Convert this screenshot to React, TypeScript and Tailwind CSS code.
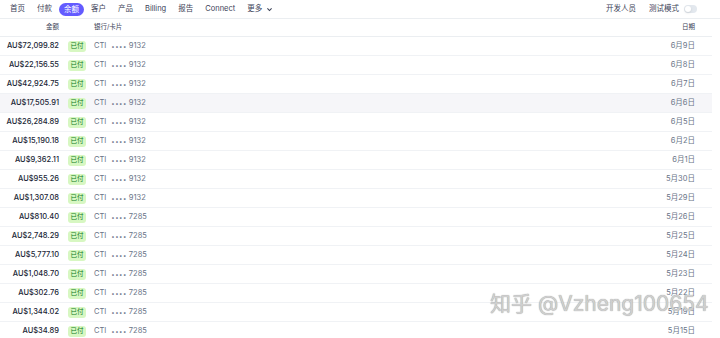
const navItems = ["首页", "付款", "余额", "客户", "产品", "Billing", "报告", "Connect"];

type Row = { amount: string; last4: string; date: string };

const rows: Row[] = [
  { amount: "AU$72,099.82", last4: "9132", date: "6月9日" },
  { amount: "AU$22,156.55", last4: "9132", date: "6月8日" },
  { amount: "AU$42,924.75", last4: "9132", date: "6月7日" },
  { amount: "AU$17,505.91", last4: "9132", date: "6月6日" },
  { amount: "AU$26,284.89", last4: "9132", date: "6月5日" },
  { amount: "AU$15,190.18", last4: "9132", date: "6月2日" },
  { amount: "AU$9,362.11", last4: "9132", date: "6月1日" },
  { amount: "AU$955.26", last4: "9132", date: "5月30日" },
  { amount: "AU$1,307.08", last4: "9132", date: "5月29日" },
  { amount: "AU$810.40", last4: "7285", date: "5月26日" },
  { amount: "AU$2,748.29", last4: "7285", date: "5月25日" },
  { amount: "AU$5,777.10", last4: "7285", date: "5月24日" },
  { amount: "AU$1,048.70", last4: "7285", date: "5月23日" },
  { amount: "AU$302.76", last4: "7285", date: "5月22日" },
  { amount: "AU$1,344.02", last4: "7285", date: "5月19日" },
  { amount: "AU$34.89", last4: "7285", date: "5月15日" },
];

export default function App() {
  return (
    <div className="relative w-[720px] h-[338px] overflow-hidden bg-white text-[7.5px] text-[#3c4257] font-['Inter','Noto_Sans_CJK_SC',sans-serif]">
      {/* Top nav */}
      <div className="flex items-center justify-between h-[19px] pl-[10px] pr-[23px] border-b border-[#ebeef1]">
        <div className="flex items-center gap-[12px]">
          {navItems.map((item) =>
            item === "余额" ? (
              <span
                key={item}
                className="px-[5px] h-[13px] leading-[13px] rounded-full bg-[#635bff] text-white -mx-[5px]"
              >
                {item}
              </span>
            ) : (
              <span key={item}>{item}</span>
            ),
          )}
          <span className="flex items-center gap-[4px]">
            更多
            <svg width="7" height="7" viewBox="0 0 10 10" fill="none" stroke="#3c4257" strokeWidth="1.6">
              <path d="M2 3.5l3 3 3-3" />
            </svg>
          </span>
        </div>
        <div className="flex items-center gap-[13px]">
          <span>开发人员</span>
          <span className="flex items-center gap-[5px]">
            测试模式
            <span className="w-[13px] h-[8px] rounded-full bg-[#e3e8ee] flex items-center px-[1px]">
              <span className="w-[6px] h-[6px] rounded-full bg-white shadow" />
            </span>
          </span>
        </div>
      </div>

      {/* Table */}
      <div className="w-[712px]">
        <div className="flex items-center h-[18px] text-[6.5px] text-[#3c4257] border-b border-[#ebeef1]">
          <span className="w-[59px] text-right">金额</span>
          <span className="ml-[35px]">银行/卡片</span>
          <span className="ml-auto pr-[17px]">日期</span>
        </div>
        {rows.map((r, i) => (
          <div
            key={r.amount}
            className={
              "flex items-center h-[19px] border-b border-[#f0f2f5] " + (i === 3 ? "bg-[#f6f6f9]" : "")
            }
          >
            <span className="w-[59px] text-right font-medium text-[#1a1f36]">{r.amount}</span>
            <span className="ml-[9px] w-[18px] h-[11px] leading-[11px] rounded-[3px] bg-[#d7f7c2] text-[#0a7a21] text-center text-[6.5px]">
              已付
            </span>
            <span className="ml-[8px] text-[#697386]">CTI</span>
            <span className="ml-[5px] text-[#697386] text-[6px] tracking-[0.5px]">••••</span>
            <span className="ml-[2px] text-[#697386]">{r.last4}</span>
            <span className="ml-auto pr-[17px] text-[#697386]">{r.date}</span>
          </div>
        ))}
      </div>

      {/* Watermark */}
      <div className="absolute left-[490px] top-[292px] text-[21px] leading-[24px] text-[#cfcfcf] whitespace-nowrap [text-shadow:0_0_1px_#8a8a8a]">
        知乎 @Vzheng100654
      </div>
    </div>
  );
}
